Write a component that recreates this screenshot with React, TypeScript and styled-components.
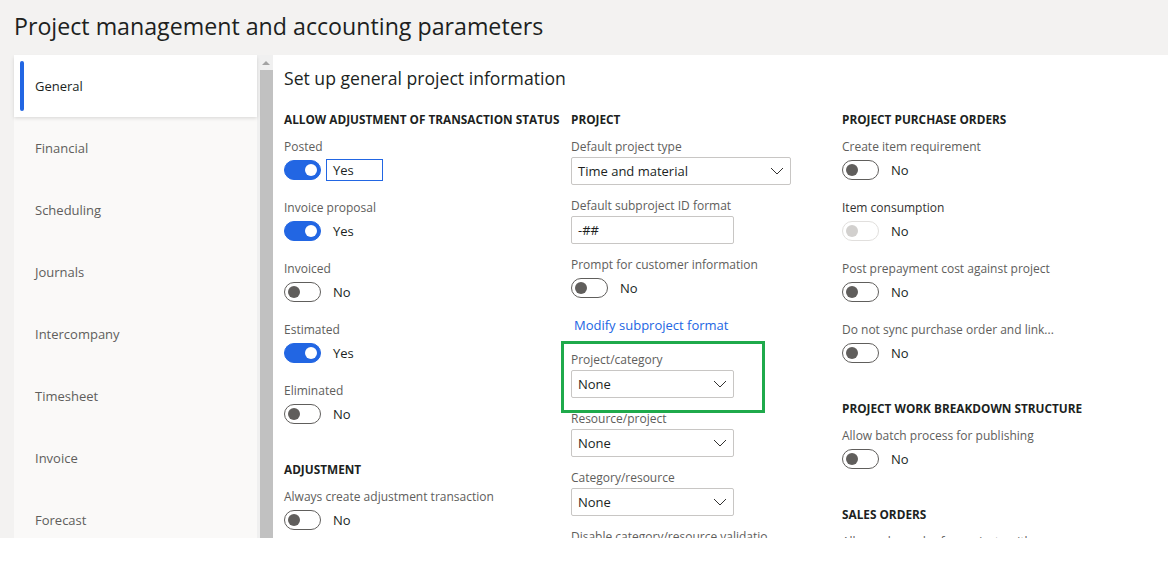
import React from 'react';
import styled, { createGlobalStyle } from 'styled-components';

const GlobalStyle = createGlobalStyle`
  body {
    margin: 0;
    background: #ffffff;
    font-family: "Segoe UI", "Open Sans", "Noto Sans", sans-serif;
  }
`;

const Shell = styled.div`
  height: 538px;
  width: 1168px;
  background: #f3f2f1;
  display: flex;
  flex-direction: column;
  overflow: hidden;
`;

const PageTitle = styled.h1`
  margin: 0;
  height: 55px;
  padding: 10px 0 0 14px;
  box-sizing: border-box;
  font-size: 23.2px;
  font-weight: 400;
  color: #201f1e;
`;

const Body = styled.div`
  flex: 1;
  min-height: 0;
  display: flex;
  padding-left: 14px;
`;

const Nav = styled.nav`
  width: 243px;
  background: #faf9f8;
  display: flex;
  flex-direction: column;
`;

const NavItem = styled.div<{ $active?: boolean }>`
  height: 62px;
  flex-shrink: 0;
  display: flex;
  align-items: center;
  padding-left: 21px;
  position: relative;
  font-size: 13px;
  color: ${p => (p.$active ? '#201f1e' : '#605e5c')};
  background: ${p => (p.$active ? '#ffffff' : 'transparent')};
  box-shadow: ${p => (p.$active ? '0 1.6px 3.6px rgba(0,0,0,0.13)' : 'none')};
  z-index: ${p => (p.$active ? 1 : 0)};

  &::before {
    content: '';
    display: ${p => (p.$active ? 'block' : 'none')};
    position: absolute;
    left: 6px;
    top: 6px;
    bottom: 6px;
    width: 4px;
    border-radius: 2px;
    background: #2266e3;
  }
`;

const ScrollTrack = styled.div`
  width: 16px;
  background: #f0f0f0;
  display: flex;
  flex-direction: column;
  align-items: flex-end;
`;

const ScrollArrow = styled.div`
  height: 15px;
  width: 14px;
  display: flex;
  align-items: center;
  justify-content: center;

  &::after {
    content: '';
    border-left: 4px solid transparent;
    border-right: 4px solid transparent;
    border-bottom: 4px solid #a3a3a3;
  }
`;

const ScrollThumb = styled.div`
  flex: 1;
  width: 13px;
  background: #c1c1c1;
`;

const Main = styled.main`
  flex: 1;
  background: #ffffff;
  padding: 11px 0 0 11px;
  overflow: hidden;
`;

const SectionTitle = styled.h2`
  margin: 0 0 21px 0;
  font-size: 17.6px;
  line-height: 24px;
  font-weight: 400;
  color: #201f1e;
`;

const Columns = styled.div`
  display: grid;
  grid-template-columns: 287px 271px 1fr;
`;

const Column = styled.div`
  display: flex;
  flex-direction: column;
`;

const GroupHeading = styled.h3<{ $top?: number }>`
  margin: ${p => p.$top ?? 0}px 0 10px 0;
  font-size: 11.8px;
  line-height: 16px;
  font-weight: 700;
  color: #201f1e;
  white-space: nowrap;
`;

const Field = styled.div<{ $gap?: number }>`
  display: flex;
  flex-direction: column;
  margin-bottom: ${p => p.$gap ?? 14}px;
`;

const Label = styled.label<{ $dark?: boolean; $gap?: number }>`
  font-size: 12px;
  color: ${p => (p.$dark ? '#323130' : '#605e5c')};
  line-height: 18px;
  padding-top: 1px;
  margin-bottom: ${p => (p.$gap ?? 1) - 1}px;
  white-space: nowrap;
`;

const ToggleRow = styled.div`
  display: flex;
  align-items: center;
  height: 28px;
`;

const ToggleTrack = styled.div<{ $on?: boolean; $disabled?: boolean }>`
  width: 37px;
  height: 20px;
  box-sizing: border-box;
  border-radius: 10px;
  border: 1px solid
    ${p => (p.$disabled ? '#e1dfdd' : p.$on ? '#2266e3' : '#605e5c')};
  background: ${p => (p.$on ? '#2266e3' : '#ffffff')};
  display: flex;
  align-items: center;
  justify-content: ${p => (p.$on ? 'flex-end' : 'flex-start')};
  padding: 0 3px;
  flex-shrink: 0;
`;

const ToggleKnob = styled.div<{ $on?: boolean; $disabled?: boolean }>`
  width: 12px;
  height: 12px;
  border-radius: 50%;
  background: ${p => (p.$on ? '#ffffff' : p.$disabled ? '#d2d0ce' : '#605e5c')};
`;

const ToggleValue = styled.span<{ $focused?: boolean }>`
  margin-left: 5px;
  font-size: 13px;
  color: #201f1e;
  box-sizing: border-box;
  height: 22px;
  line-height: 20px;
  width: 57px;
  padding-left: 6px;
  border: 1px solid ${p => (p.$focused ? '#2266e3' : 'transparent')};
`;

const Box = styled.div<{ $width: number }>`
  width: ${p => p.$width}px;
  height: 28px;
  box-sizing: border-box;
  border: 1px solid #c8c6c4;
  border-radius: 2px;
  display: flex;
  align-items: center;
  justify-content: space-between;
  padding: 0 6px 0 6px;
  font-size: 13px;
  color: #201f1e;
  background: #ffffff;
`;

const Link = styled.a`
  font-size: 13px;
  color: #2266e3;
  text-decoration: none;
  padding-left: 3px;
  margin: -1px 0 15px 0;
  line-height: 20px;
`;

const Highlighted = styled(Field)`
  position: relative;

  &::after {
    content: '';
    position: absolute;
    left: -10px;
    top: -9px;
    width: 204px;
    height: 72px;
    box-sizing: border-box;
    border: 3px solid #1faa4b;
    z-index: 2;
    pointer-events: none;
  }
`;

const Chevron = () => (
  <svg width="14" height="8" viewBox="0 0 14 8">
    <path d="M1 1 L7 7 L13 1" fill="none" stroke="#323130" strokeWidth="1" />
  </svg>
);

type ToggleProps = {
  label: string;
  on?: boolean;
  disabled?: boolean;
  focused?: boolean;
  dark?: boolean;
};

const ToggleField = ({ label, on, disabled, focused, dark }: ToggleProps) => (
  <Field>
    <Label $dark={dark}>{label}</Label>
    <ToggleRow>
      <ToggleTrack $on={on} $disabled={disabled}>
        <ToggleKnob $on={on} $disabled={disabled} />
      </ToggleTrack>
      <ToggleValue $focused={focused}>{on ? 'Yes' : 'No'}</ToggleValue>
    </ToggleRow>
  </Field>
);

const SelectField = ({ label, value, width }: { label: string; value: string; width: number }) => (
  <Field $gap={11}>
    <Label $gap={2}>{label}</Label>
    <Box $width={width}>
      <span>{value}</span>
      <Chevron />
    </Box>
  </Field>
);

const navItems = [
  'General',
  'Financial',
  'Scheduling',
  'Journals',
  'Intercompany',
  'Timesheet',
  'Invoice',
  'Forecast',
  'Budget',
];

export default function App() {
  return (
    <>
      <GlobalStyle />
      <Shell>
        <PageTitle>Project management and accounting parameters</PageTitle>
        <Body>
          <Nav>
            {navItems.map((item, i) => (
              <NavItem key={item} $active={i === 0}>
                {item}
              </NavItem>
            ))}
          </Nav>
          <ScrollTrack>
            <ScrollArrow />
            <ScrollThumb />
          </ScrollTrack>
          <Main>
            <SectionTitle>Set up general project information</SectionTitle>
            <Columns>
              <Column>
                <GroupHeading>ALLOW ADJUSTMENT OF TRANSACTION STATUS</GroupHeading>
                <ToggleField label="Posted" on focused />
                <ToggleField label="Invoice proposal" on />
                <ToggleField label="Invoiced" />
                <ToggleField label="Estimated" on />
                <ToggleField label="Eliminated" />
                <GroupHeading $top={19}>ADJUSTMENT</GroupHeading>
                <ToggleField label="Always create adjustment transaction" />
              </Column>
              <Column>
                <GroupHeading>PROJECT</GroupHeading>
                <SelectField label="Default project type" value="Time and material" width={220} />
                <Field $gap={11}>
                  <Label $gap={2}>Default subproject ID format</Label>
                  <Box $width={163}>-##</Box>
                </Field>
                <ToggleField label="Prompt for customer information" />
                <Link href="#">Modify subproject format</Link>
                <Highlighted $gap={11}>
                  <Label $gap={2}>Project/category</Label>
                  <Box $width={163}>
                    <span>None</span>
                    <Chevron />
                  </Box>
                </Highlighted>
                <SelectField label="Resource/project" value="None" width={163} />
                <SelectField label="Category/resource" value="None" width={163} />
                <Field>
                  <Label>Disable category/resource validatio</Label>
                </Field>
              </Column>
              <Column>
                <GroupHeading>PROJECT PURCHASE ORDERS</GroupHeading>
                <ToggleField label="Create item requirement" />
                <ToggleField label="Item consumption" disabled dark />
                <ToggleField label="Post prepayment cost against project" />
                <ToggleField label="Do not sync purchase order and link..." />
                <GroupHeading $top={19}>PROJECT WORK BREAKDOWN STRUCTURE</GroupHeading>
                <ToggleField label="Allow batch process for publishing" />
                <GroupHeading $top={19}>SALES ORDERS</GroupHeading>
                <Field>
                  <Label>Allow sales order for projects with...</Label>
                </Field>
              </Column>
            </Columns>
          </Main>
        </Body>
      </Shell>
    </>
  );
}
